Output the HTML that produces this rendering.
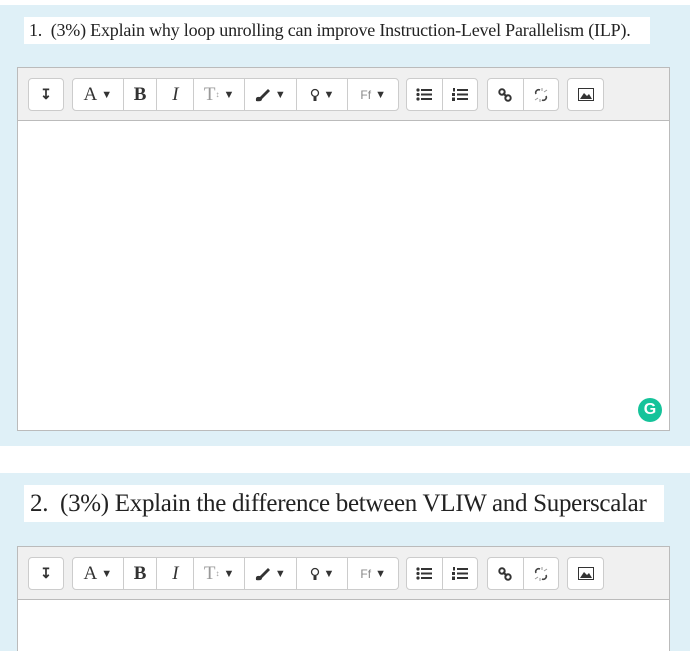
<!DOCTYPE html>
<html style="overflow:hidden;height:651px"><head><style>
body{margin:0;width:696px;height:651px;overflow:hidden;background:#fff;font-family:"Liberation Sans",sans-serif;position:relative}
.panel{position:absolute;left:0;width:690px;background:#dff0f7}
.title{position:absolute;left:24px;background:#fff;font-family:"Liberation Serif",serif;color:#222;white-space:nowrap}
.ed{position:absolute;left:17px;width:651px;border:1px solid #bbb;background:#fff}
.tb{height:52px;background:#f0f0f0;border-bottom:1px solid #bbb;position:relative}
.g{position:absolute;top:10px;height:31px;border:1px solid #ccc;border-radius:4px;background:#fff;display:flex}
.b{height:31px;display:flex;align-items:center;justify-content:center;border-right:1px solid #ccc;color:#333;font-size:14px}
.b:last-child{border-right:none}
.s{font-family:"Liberation Serif",serif;font-size:19px}
.car{font-size:11px;margin-left:4px}
</style></head><body>

<div class="panel" style="top:5px;height:441px"></div>
<div class="title" style="top:17px;height:27px;width:621px;font-size:18px;line-height:27px;padding-left:5px;letter-spacing:-0.2px">1.&nbsp;&nbsp;(3%) Explain why loop unrolling can improve Instruction-Level Parallelism (ILP).</div>
<div class="ed" style="top:67px;height:362px">
<div class="tb" id="t1"></div>
<div style="position:absolute;left:620px;top:330px;width:24px;height:24px;border-radius:50%;background:#15c39a;color:#fff;font-weight:bold;font-size:16px;text-align:center;line-height:24px">G</div>
</div>

<div class="panel" style="top:473px;height:178px"></div>
<div class="title" style="top:485px;height:37px;width:634px;font-size:25px;line-height:37px;padding-left:6px;letter-spacing:-0.3px">2.&nbsp;&nbsp;(3%) Explain the difference between VLIW and Superscalar</div>
<div class="ed" style="top:546px;height:120px">
<div class="tb" id="t2"></div>
</div>

<template id="tpl">
<div class="g" style="left:10px;width:34px"><div class="b" style="width:34px;font-weight:bold">&#x21A7;</div></div>
<div class="g" style="left:54px;width:325px">
<div class="b" style="width:50px"><span class="s">A</span><span class="car">&#9660;</span></div>
<div class="b s" style="width:33px;font-weight:bold">B</div>
<div class="b s" style="width:36px;font-style:italic">I</div>
<div class="b" style="width:50px;color:#999"><span class="s">T</span><span style="font-size:8px">&#x2195;</span><span class="car" style="color:#333">&#9660;</span></div>
<div class="b" style="width:51px"><svg width="16" height="14"><path d="M1 13 Q0 8 5 9 L13 1 L15 3 L7 11 Q7 14 1 13Z" fill="#333"/></svg><span class="car">&#9660;</span></div>
<div class="b" style="width:51px"><svg width="10" height="14"><circle cx="5" cy="5" r="3.5" fill="none" stroke="#333" stroke-width="1.3"/><rect x="3.5" y="9" width="3" height="4" fill="#333"/></svg><span class="car">&#9660;</span></div>
<div class="b" style="width:50px;color:#888;font-size:12px">Ff<span class="car" style="color:#333">&#9660;</span></div>
</div>
<div class="g" style="left:388px;width:70px">
<div class="b" style="width:35px"><svg width="16" height="13"><g fill="#333"><circle cx="2" cy="2" r="1.6"/><circle cx="2" cy="6.5" r="1.6"/><circle cx="2" cy="11" r="1.6"/><rect x="5" y="1" width="11" height="2"/><rect x="5" y="5.5" width="11" height="2"/><rect x="5" y="10" width="11" height="2"/></g></svg></div>
<div class="b" style="width:35px"><svg width="16" height="13"><g fill="#333"><rect x="1" y="0" width="2" height="3.5"/><rect x="0" y="5" width="3" height="3"/><rect x="0" y="9.5" width="3" height="3.5"/><rect x="5" y="1" width="11" height="2"/><rect x="5" y="5.5" width="11" height="2"/><rect x="5" y="10" width="11" height="2"/></g></svg></div>
</div>
<div class="g" style="left:469px;width:70px">
<div class="b" style="width:35px"><svg width="14" height="14"><g fill="none" stroke="#333" stroke-width="2"><circle cx="4" cy="4" r="2.7"/><circle cx="10" cy="10" r="2.7"/></g><line x1="5" y1="5" x2="9" y2="9" stroke="#333" stroke-width="2"/></svg></div>
<div class="b" style="width:35px"><svg width="14" height="14"><g fill="none" stroke="#444" stroke-width="1.6"><path d="M6 2 A3 3 0 0 0 2 6"/><path d="M8 12 A3 3 0 0 0 12 8"/></g><g stroke="#999" stroke-width="1"><line x1="8" y1="0" x2="8" y2="3"/><line x1="10" y1="4" x2="13" y2="2"/><line x1="6" y1="14" x2="6" y2="11"/><line x1="4" y1="10" x2="1" y2="12"/></g></svg></div>
</div>
<div class="g" style="left:549px;width:35px">
<div class="b" style="width:35px"><svg width="16" height="13"><rect x="0.5" y="0.5" width="15" height="12" fill="none" stroke="#333"/><path d="M2 11 L6 5 L9 8 L11 6 L14 11Z" fill="#333"/></svg></div>
</div>
</template>
<script>
var h=document.getElementById('tpl').innerHTML;
document.getElementById('t1').innerHTML=h;
document.getElementById('t2').innerHTML=h;
</script>
</body></html>
